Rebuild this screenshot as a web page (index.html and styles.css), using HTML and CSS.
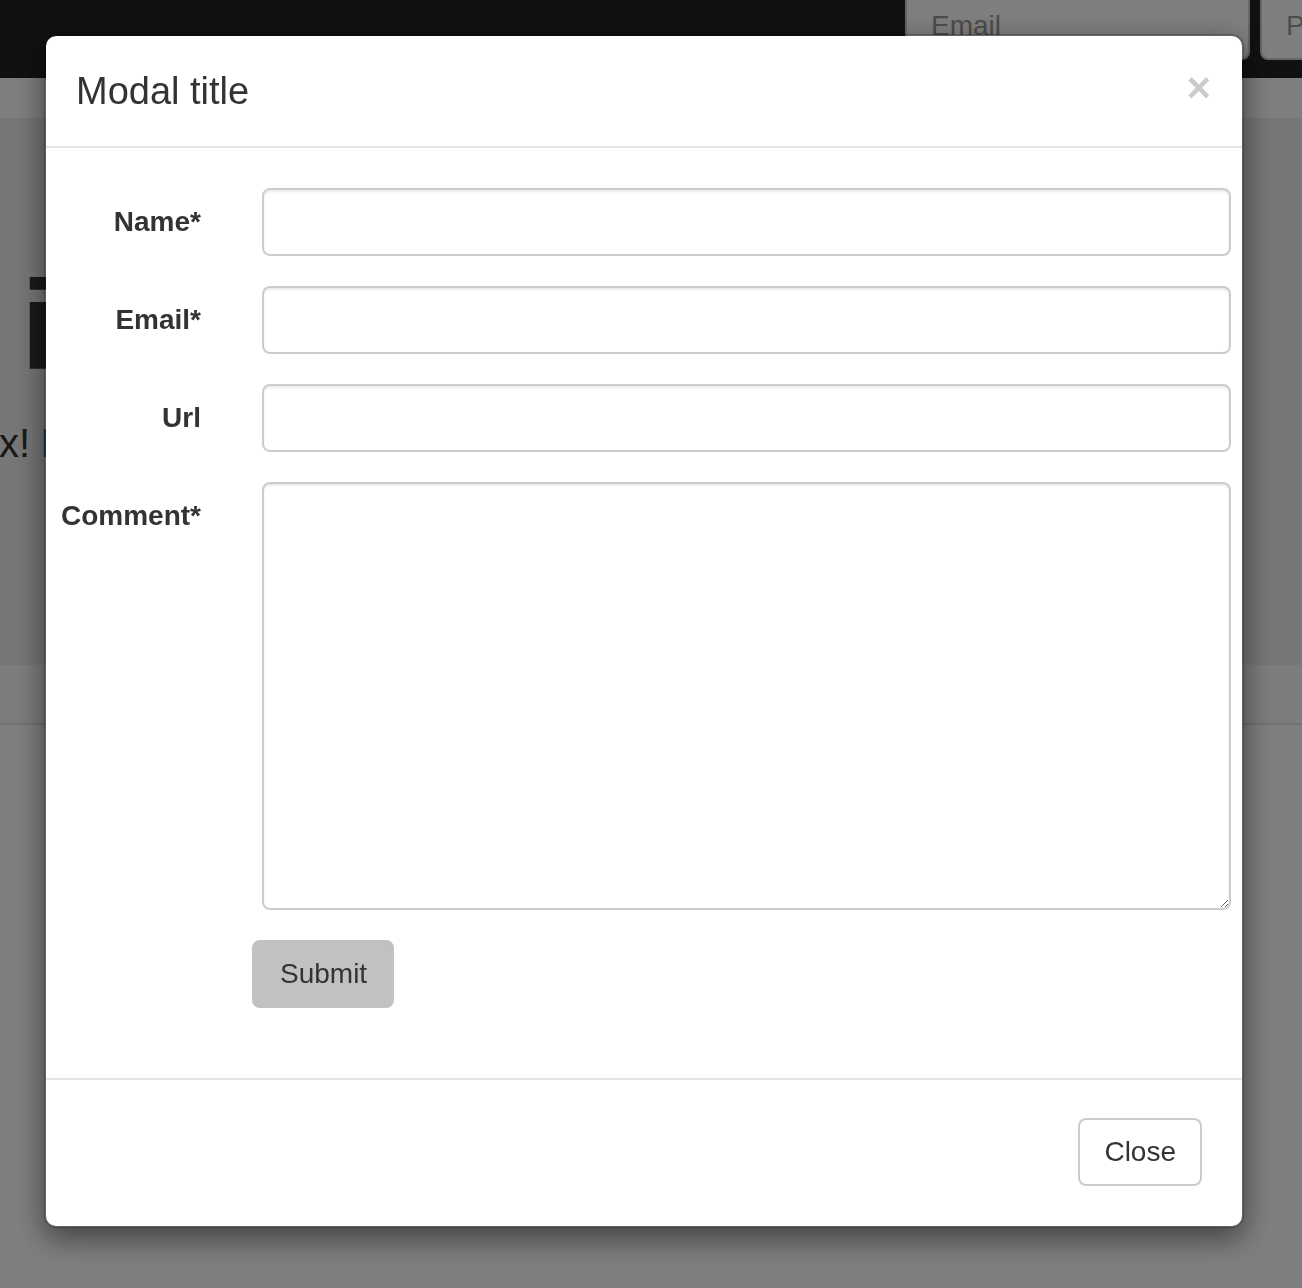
FILE: index.html
```html
<!DOCTYPE html>
<html lang="en">
<head>
<meta charset="utf-8">
<title>Modal</title>
<link rel="stylesheet" href="styles.css">
</head>
<body>
<div class="page">
  <nav class="navbar">
    <input class="nav-input" type="text" placeholder="Email">
    <input class="nav-input" type="password" placeholder="Password">
  </nav>
  <div class="band"></div>
  <section class="jumbotron">
    <h1 class="jumbo-title">i</h1>
    <p class="lead">x! <a class="lead-link" href="#">L</a></p>
  </section>
  <div class="strip"></div>
</div>

<div class="backdrop"></div>

<div class="modal">
  <div class="modal-content">
    <div class="modal-header">
      <button class="close" type="button">&times;</button>
      <h4 class="modal-title">Modal title</h4>
    </div>
    <div class="modal-body">
      <form class="form">
        <label class="control-label">Name*</label>
        <div class="field"><input class="form-control" type="text"></div>
        <label class="control-label">Email*</label>
        <div class="field"><input class="form-control" type="email"></div>
        <label class="control-label">Url</label>
        <div class="field"><input class="form-control" type="text"></div>
        <label class="control-label">Comment*</label>
        <div class="field"><textarea class="form-control textarea"></textarea></div>
        <div></div>
        <div class="submit-cell"><button class="btn btn-submit" type="button">Submit</button></div>
      </form>
    </div>
    <div class="modal-footer">
      <button class="btn btn-default" type="button">Close</button>
    </div>
  </div>
</div>
</body>
</html>
```
FILE: styles.css
```css
* { box-sizing: border-box; }

html, body {
  margin: 0;
  padding: 0;
  height: 100%;
  overflow: hidden;
}

body {
  background: #fff;
  font-family: "Liberation Sans", Arial, Helvetica, sans-serif;
  color: #333;
  font-size: 28px;
}

/* ---------- background page ---------- */
.page {
  width: 100%;
  overflow: hidden;
}

.navbar {
  height: 78px;
  background: #222;
  display: flex;
  align-items: flex-start;
  gap: 10px;
  padding-left: 905px;
  overflow: hidden;
}

.nav-input {
  flex: 0 0 345px;
  width: 345px;
  height: 68px;
  margin-top: -8px;
  border: 2px solid #ccc;
  border-radius: 8px;
  background: #fff;
  padding: 12px 24px;
  font-family: inherit;
  font-size: 28px;
  color: #555;
}
.nav-input::placeholder { color: #999; }

.band {
  height: 40px;
  background: #fff;
}

.jumbotron {
  height: 547px;
  background: #eee;
  padding-top: 139px;
  overflow: hidden;
}

.jumbo-title {
  margin: 0;
  padding-left: 21px;
  font-size: 126px;
  line-height: 1.1;
  font-weight: bold;
  color: #333;
  white-space: nowrap;
}

.lead {
  margin: 18px 0 0 -1px;
  font-size: 40px;
  line-height: 1.47;
  color: #333;
  white-space: nowrap;
  word-spacing: -1px;
}

.lead-link {
  color: #428bca;
  text-decoration: none;
}

.strip {
  height: 60px;
  background: #fafafa;
  border-bottom: 2px solid #e2e2e2;
}

/* ---------- backdrop ---------- */
.backdrop {
  position: fixed;
  inset: 0;
  background: rgba(0, 0, 0, 0.5);
}

/* ---------- modal ---------- */
.modal {
  position: fixed;
  inset: 0;
  padding: 34px 0 0 44px;
}

.modal-content {
  width: 1200px;
  background: #fff;
  border: 2px solid rgba(0, 0, 0, 0.2);
  border-radius: 12px;
  box-shadow: 0 10px 30px rgba(0, 0, 0, 0.5);
  background-clip: padding-box;
}

.modal-header {
  padding: 30px;
  border-bottom: 2px solid #e5e5e5;
}

.modal-title {
  margin: 0;
  font-size: 38px;
  line-height: 50px;
  font-weight: 500;
  color: #333;
}

.close {
  float: right;
  margin-top: 1px;
  margin-right: 1px;
  padding: 0;
  border: 0;
  background: transparent;
  font-family: inherit;
  font-size: 42px;
  font-weight: bold;
  line-height: 1;
  color: #000;
  opacity: 0.2;
  cursor: pointer;
}

.modal-body {
  padding: 40px;
}

.form {
  display: grid;
  grid-template-columns: 196px 1fr;
  row-gap: 30px;
  margin: 0 -30px 0 -30px;
}

.control-label {
  padding: 14px 51px 0 0;
  text-align: right;
  font-weight: bold;
  font-size: 28px;
  line-height: 40px;
  color: #333;
}

.field {
  padding-left: 10px;
  padding-right: 1px;
}

.form-control {
  display: block;
  width: 100%;
  height: 68px;
  padding: 12px 24px;
  font-family: inherit;
  font-size: 28px;
  line-height: 40px;
  color: #555;
  background: #fff;
  border: 2px solid #ccc;
  border-radius: 8px;
  box-shadow: inset 0 2px 2px rgba(0, 0, 0, 0.075);
}

.textarea {
  height: 428px;
  resize: vertical;
}

.submit-cell {
  padding: 0;
}

.btn {
  display: inline-block;
  height: 68px;
  padding: 12px 24px;
  font-family: inherit;
  font-size: 28px;
  line-height: 40px;
  border-radius: 8px;
  color: #333;
  cursor: pointer;
}

.btn-submit {
  padding: 12px 25px 12px 26px;
  background: #c1c1c1;
  border: 2px solid #c1c1c1;
}

.btn-default {
  padding: 12px 24px;
  background: #fff;
  border: 2px solid #ccc;
}

.modal-footer {
  margin-top: 30px;
  padding: 38px 40px 40px;
  text-align: right;
  border-top: 2px solid #e5e5e5;
}
```
